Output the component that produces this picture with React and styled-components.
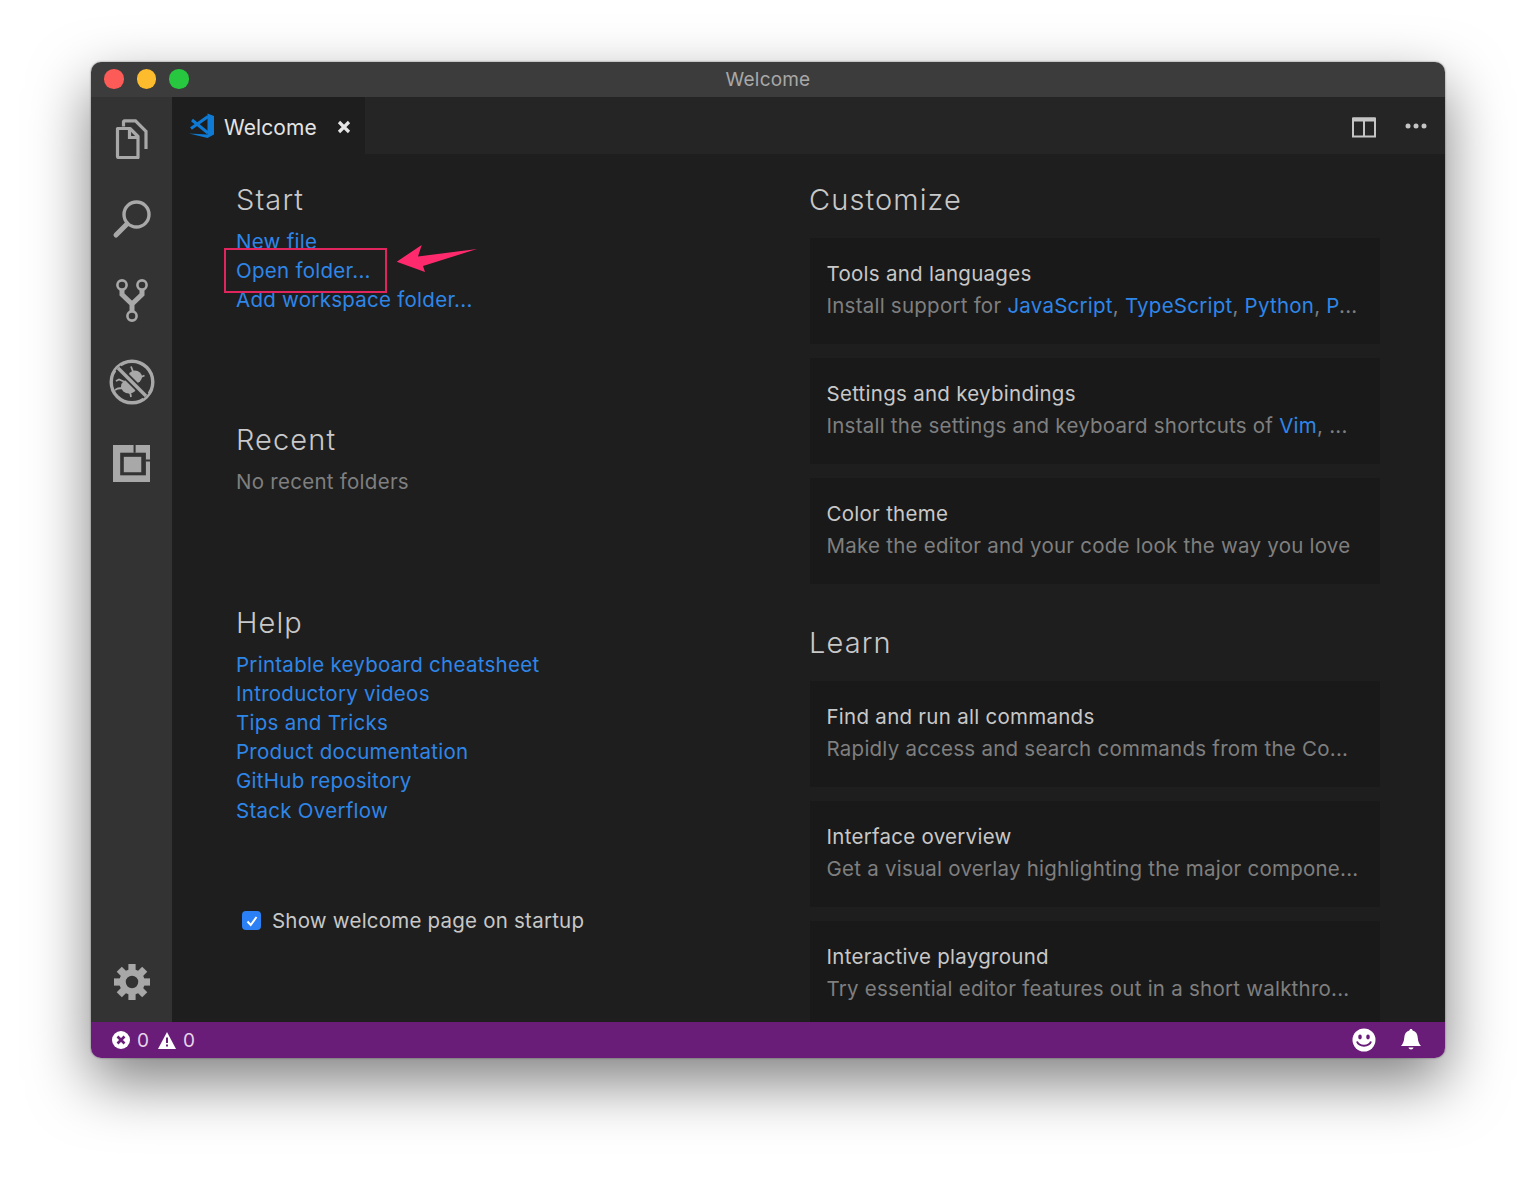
import React from "react";
import styled, { createGlobalStyle } from "styled-components";

const GlobalStyle = createGlobalStyle`
  html, body {
    margin: 0;
    background: #fff;
  }
  body {
    font-family: Inter, "Noto Sans", "Liberation Sans", sans-serif;
  }
`;

const App = () => {
  return (
    <Page>
      <GlobalStyle />
      <Window>
        <TitleBar>
          <Lights>
            <Light color="#fc5b57" />
            <Light color="#fdbc2e" />
            <Light color="#27c83f" />
          </Lights>
          Welcome
        </TitleBar>
        <Body>
          <ActivityBar>
            <ActivityTop>
              <ActivitySlot><FilesIcon /></ActivitySlot>
              <ActivitySlot><SearchIcon /></ActivitySlot>
              <ActivitySlot><BranchIcon /></ActivitySlot>
              <ActivitySlot><DebugIcon /></ActivitySlot>
              <ActivitySlot><ExtensionsIcon /></ActivitySlot>
            </ActivityTop>
            <GearIcon />
          </ActivityBar>
          <EditorArea>
            <TabBar>
              <Tab>
                <LogoIcon />
                <TabLabel>Welcome</TabLabel>
                <CloseIcon />
              </Tab>
              <TabActions>
                <SplitIcon />
                <MoreIcon />
              </TabActions>
            </TabBar>
            <Content>
              <LeftColumn>
                <Section>
                  <Heading>Start</Heading>
                  <LinkList>
                    <LinkItem>New file</LinkItem>
                    <LinkItem>Open folder...</LinkItem>
                    <LinkItem>Add workspace folder...</LinkItem>
                  </LinkList>
                  <Callout />
                  <ArrowIcon />
                </Section>
                <Section gap="105.500px">
                  <Heading>Recent</Heading>
                  <MutedLine>No recent folders</MutedLine>
                </Section>
                <Section gap="107px">
                  <Heading>Help</Heading>
                  <LinkList>
                    {helpLinks.map((item) => (
                      <LinkItem key={item}>{item}</LinkItem>
                    ))}
                  </LinkList>
                </Section>
                <StartupRow>
                  <CheckBox>
                    <svg width="14" height="14" viewBox="0 0 14 14">
                      <path d="M2.5 7.5 5.7 11 11.5 3" fill="none" stroke="#fff" strokeWidth="2" />
                    </svg>
                  </CheckBox>
                  Show welcome page on startup
                </StartupRow>
              </LeftColumn>
              <RightColumn>
                <Heading>Customize</Heading>
                <CardList>
                  <Card>
                    <CardTitle>Tools and languages</CardTitle>
                    <CardText>
                      Install support for <a>JavaScript</a>, <a>TypeScript</a>, <a>Python</a>, <a>P</a>...
                    </CardText>
                  </Card>
                  <Card>
                    <CardTitle>Settings and keybindings</CardTitle>
                    <CardText>
                      Install the settings and keyboard shortcuts of <a>Vim</a>, ...
                    </CardText>
                  </Card>
                  <Card>
                    <CardTitle>Color theme</CardTitle>
                    <CardText>Make the editor and your code look the way you love</CardText>
                  </Card>
                </CardList>
                <LearnHeading>Learn</LearnHeading>
                <CardList>
                  <Card>
                    <CardTitle>Find and run all commands</CardTitle>
                    <CardText>Rapidly access and search commands from the Co...</CardText>
                  </Card>
                  <Card>
                    <CardTitle>Interface overview</CardTitle>
                    <CardText>Get a visual overlay highlighting the major compone...</CardText>
                  </Card>
                  <Card>
                    <CardTitle>Interactive playground</CardTitle>
                    <CardText>Try essential editor features out in a short walkthro...</CardText>
                  </Card>
                </CardList>
              </RightColumn>
            </Content>
          </EditorArea>
        </Body>
        <StatusBar>
          <StatusGroup>
            <ErrorIcon />
            <Count>0</Count>
            <WarningIcon />
            <Count>0</Count>
          </StatusGroup>
          <StatusRight>
            <SmileIcon />
            <BellIcon />
          </StatusRight>
        </StatusBar>
      </Window>
    </Page>
  );
};

export default App;

const helpLinks = [
  "Printable keyboard cheatsheet",
  "Introductory videos",
  "Tips and Tricks",
  "Product documentation",
  "GitHub repository",
  "Stack Overflow",
];

const FilesIcon = () => (
  <svg width="34" height="40" viewBox="0 0 34 40" fill="none" stroke="#a8a8a8" strokeWidth="3.200">
    <path d="M2.500 9.500h12.500l8 8V38.500H3.500a1 1 0 0 1-1-1z" strokeLinejoin="round" />
    <path d="M14.500 10v8.500h8.500" />
    <path d="M8.500 7.500V3a1 1 0 0 1 1-1.200H20.500L31 12.500V30" />
  </svg>
);

const SearchIcon = () => (
  <svg width="40" height="40" viewBox="0 0 40 40" fill="none" stroke="#a8a8a8">
    <circle cx="24.500" cy="14.500" r="12.500" strokeWidth="3.400" />
    <path d="M15 24 4 35" strokeWidth="5" strokeLinecap="round" />
  </svg>
);

const BranchIcon = () => (
  <svg width="34" height="46" viewBox="0 0 34 46" fill="none" stroke="#a8a8a8">
    <circle cx="7" cy="7" r="4.600" strokeWidth="2.600" />
    <circle cx="27" cy="7" r="4.600" strokeWidth="2.600" />
    <circle cx="17" cy="38" r="4.600" strokeWidth="2.600" />
    <path d="M7 12v4.500L17 26l10-9.500V12M17 24v10" strokeWidth="5" />
  </svg>
);

const DebugIcon = () => (
  <svg width="46" height="46" viewBox="0 0 46 46" fill="none" stroke="#a8a8a8">
    <circle cx="23" cy="23" r="20.800" strokeWidth="3.400" />
    <g strokeWidth="1.800">
      <path d="M22 7.500l2 5M35.500 16.500l-6 2.500" />
      <path d="M7 22l3-1.500 6 2.500M6 31l3-1.500 5-.5" />
      <path d="M22 38l-.5-3-1.500-2M33 33l-3-2-2-.5" />
    </g>
    <ellipse cx="26" cy="18" rx="7" ry="6.500" fill="#a8a8a8" stroke="none" />
    <ellipse cx="20" cy="27.500" rx="8" ry="7" fill="#a8a8a8" stroke="none" />
    <path d="M9 9l28 28" stroke="#333" strokeWidth="7" />
    <path d="M9 9l28 28" strokeWidth="3.400" />
  </svg>
);

const ExtensionsIcon = () => (
  <svg width="37" height="37" viewBox="0 0 36 36">
    <rect width="36" height="36" fill="#a8a8a8" />
    <rect x="7" y="7.500" width="25" height="22" fill="#333" />
    <rect x="10.500" y="11.500" width="17" height="15" fill="#a8a8a8" />
    <path d="M20 0h2v7.500h-2zM32 14h4v2h-4z" fill="#333" />
  </svg>
);

const GearIcon = () => (
  <svg width="38" height="38" viewBox="-19 -19 38 38">
    <g fill="#a8a8a8">
      {[0, 45, 90, 135, 180, 225, 270, 315].map((deg) => (
        <rect key={deg} x="-3.600" y="-18" width="7.200" height="9" transform={`rotate(${deg})`} />
      ))}
    </g>
    <circle r="9.500" fill="none" stroke="#a8a8a8" strokeWidth="6.500" />
  </svg>
);

const LogoIcon = () => (
  <svg width="26" height="26" viewBox="0 0 26 26" fill="none">
    <path d="M18.500 .5 25 3V21.500L18.500 25 0 20.500l18.500 1z" fill="#0e7ad3" />
    <path d="M19 3.500 2 15.500M3 7 19 20" stroke="#0e7ad3" strokeWidth="3" />
  </svg>
);

const CloseIcon = () => (
  <svg width="14" height="16" viewBox="0 0 14 16">
    <path d="M2 4l10 10M12 4 2 14" stroke="#e4e4e4" strokeWidth="3.200" />
  </svg>
);

const SplitIcon = () => (
  <svg width="24" height="24" viewBox="0 0 24 24" fill="none" stroke="#c5c5c5">
    <path d="M1 4.500h22v18H1z" strokeWidth="2" />
    <path d="M1 5.500h22" strokeWidth="4" />
    <path d="M12 5v17" strokeWidth="2" />
  </svg>
);

const MoreIcon = () => (
  <svg width="22" height="6" viewBox="0 0 22 6" fill="#c5c5c5">
    <circle cx="3" cy="3" r="2.500" />
    <circle cx="11" cy="3" r="2.500" />
    <circle cx="19" cy="3" r="2.500" />
  </svg>
);

const ErrorIcon = () => (
  <svg width="18" height="18" viewBox="0 0 18 18">
    <circle cx="9" cy="9" r="9" fill="#fff" />
    <path d="M5.500 5.500l7 7M12.500 5.500l-7 7" stroke="#691c78" strokeWidth="2.600" />
  </svg>
);

const WarningIcon = () => (
  <svg width="18" height="17" viewBox="0 0 18 17">
    <path d="M9 0 18 17H0z" fill="#fff" />
    <path d="M8 5.500h2V11H8zM8 12.500h2v2H8z" fill="#691c78" />
  </svg>
);

const SmileIcon = () => (
  <svg width="24" height="24" viewBox="0 0 24 24">
    <circle cx="12" cy="12" r="11.500" fill="#fff" />
    <ellipse cx="8" cy="9" rx="1.800" ry="2.400" fill="#691c78" />
    <ellipse cx="16" cy="9" rx="1.800" ry="2.400" fill="#691c78" />
    <path d="M5 13.500c2 5.500 12 5.500 14 0" fill="none" stroke="#691c78" strokeWidth="2" />
  </svg>
);

const BellIcon = () => (
  <svg width="22" height="22" viewBox="0 0 22 22" fill="#fff">
    <path d="M11 0c1 0 1.500.7 1.600 1.500C16 2.300 17.500 5 17.800 9c.2 3.500 1.400 6 3.200 8H1c1.800-2 3-4.500 3.200-8 .3-4 1.800-6.700 5.200-7.500C9.500.7 10 0 11 0z" />
    <path d="M8.500 18.500h5c-.4 2.600-4.600 2.600-5 0z" />
  </svg>
);

const ArrowIcon = () => (
  <Arrow width="84" height="32" viewBox="0 0 84 32">
    <path d="M.7 16.700 25.700 0 22 11.500 81 4 27 21l2 6z" fill="#ff2a6d" />
  </Arrow>
);

const Page = styled.div`
  box-sizing: border-box;
  width: 1536px;
  height: 1178px;
  padding: 62px 91px 0;
  overflow: hidden;
`;
const Window = styled.div`
  display: flex;
  flex-direction: column;
  width: 1354px;
  height: 996px;
  border-radius: 10px;
  overflow: hidden;
  box-shadow: 0 0 2px rgba(0, 0, 0, 0.5), 0 24px 60px rgba(0, 0, 0, 0.5);
  color: #ccc;
`;
const TitleBar = styled.div`
  position: relative;
  flex: none;
  height: 35px;
  display: flex;
  align-items: center;
  justify-content: center;
  background: #3c3c3c;
  color: #a8a8a8;
  font-size: 19px;
  letter-spacing: 0.2px;
`;
const Lights = styled.div`
  position: absolute;
  left: 13px;
  top: 7px;
  display: flex;
  gap: 13px;
`;
const Light = styled.span`
  width: 19.500px;
  height: 19.500px;
  border-radius: 50%;
  background: ${(props) => props.color};
`;
const Body = styled.div`
  flex: 1;
  min-height: 0;
  display: flex;
`;
const ActivityBar = styled.div`
  flex: none;
  width: 81px;
  padding: 1.500px 0 21px;
  box-sizing: border-box;
  background: #333;
  display: flex;
  flex-direction: column;
  align-items: center;
  justify-content: space-between;
`;
const ActivityTop = styled.div`
  display: flex;
  flex-direction: column;
  align-items: center;
`;
const ActivitySlot = styled.div`
  height: 81px;
  display: flex;
  align-items: center;
  justify-content: center;
`;
const EditorArea = styled.div`
  flex: 1;
  min-width: 0;
  display: flex;
  flex-direction: column;
  background: #1e1e1e;
`;
const TabBar = styled.div`
  flex: none;
  height: 57px;
  display: flex;
  justify-content: space-between;
  background: #252526;
`;
const Tab = styled.div`
  width: 193px;
  box-sizing: border-box;
  padding: 0 14px 0 17px;
  display: flex;
  align-items: center;
  background: #1e1e1e;
`;
const TabLabel = styled.span`
  flex: 1;
  margin: 3px 0 0 9px;
  font-size: 21px;
  letter-spacing: 0.1px;
  color: #e4e4e4;
`;
const TabActions = styled.div`
  display: flex;
  align-items: center;
  gap: 29px;
  padding: 0 18px 0 0;
`;
const Content = styled.div`
  flex: 1;
  min-height: 0;
  overflow: hidden;
  display: flex;
  padding: 26px 64px 0;
`;
const LeftColumn = styled.div`
  flex: none;
  width: 573px;
`;
const RightColumn = styled.div`
  flex: none;
  width: 572px;
`;
const Section = styled.section`
  position: relative;
  margin-top: ${(props) => props.gap || 0};
`;
const Heading = styled.h2`
  margin: 0;
  font-size: 29px;
  font-weight: 300;
  letter-spacing: 1.1px;
  line-height: 40px;
  color: #c8c8c8;
`;
const LearnHeading = styled(Heading)`
  margin-top: 39px;
`;
const LinkList = styled.div`
  margin-top: 7px;
  display: flex;
  flex-direction: column;
`;
const LinkItem = styled.a`
  font-size: 20.500px;
  letter-spacing: 0.27px;
  line-height: 29.200px;
  color: #2e86e8;
`;
const MutedLine = styled.div`
  margin-top: 6.500px;
  font-size: 20.500px;
  letter-spacing: 0.27px;
  line-height: 29px;
  color: #7f7f7f;
`;
const StartupRow = styled.label`
  margin: 81.500px 0 0 6px;
  display: flex;
  align-items: center;
  gap: 11px;
  font-size: 20.500px;
  letter-spacing: 0.22px;
  line-height: 29px;
  color: #c8c8c8;
`;
const CheckBox = styled.span`
  width: 19px;
  height: 19px;
  border-radius: 4px;
  background: #2c80f6;
  display: flex;
  align-items: center;
  justify-content: center;
`;
const CardList = styled.div`
  margin-top: 18px;
  display: flex;
  flex-direction: column;
  gap: 14px;
`;
const Card = styled.div`
  flex: none;
  box-sizing: border-box;
  width: 570px;
  height: 106px;
  margin-left: 1px;
  padding: 21px 17px 0 16.500px;
  background: #191919;
`;
const CardTitle = styled.div`
  font-size: 20.500px;
  letter-spacing: 0.27px;
  line-height: 29px;
  color: #c8c8c8;
`;
const CardText = styled.div`
  margin-top: 3px;
  font-size: 20.500px;
  letter-spacing: 0.24px;
  line-height: 29px;
  color: #7f7f7f;
  white-space: nowrap;
  a {
    color: #2e86e8;
  }
`;
const Callout = styled.div`
  position: absolute;
  left: -12px;
  top: 68px;
  width: 163px;
  height: 45px;
  box-sizing: border-box;
  border: 2px solid #e0245e;
`;
const Arrow = styled.svg`
  position: absolute;
  left: 160px;
  top: 65px;
`;
const StatusBar = styled.div`
  flex: none;
  height: 36px;
  padding: 0 23px 0 21px;
  display: flex;
  align-items: center;
  justify-content: space-between;
  background: #691c78;
  color: #fff;
`;
const StatusGroup = styled.div`
  display: flex;
  align-items: center;
  gap: 7px;
`;
const StatusRight = styled.div`
  display: flex;
  align-items: center;
  gap: 24px;
`;
const Count = styled.span`
  font-size: 19px;
  margin-right: 2px;
  color: #e6d4e9;
`;
